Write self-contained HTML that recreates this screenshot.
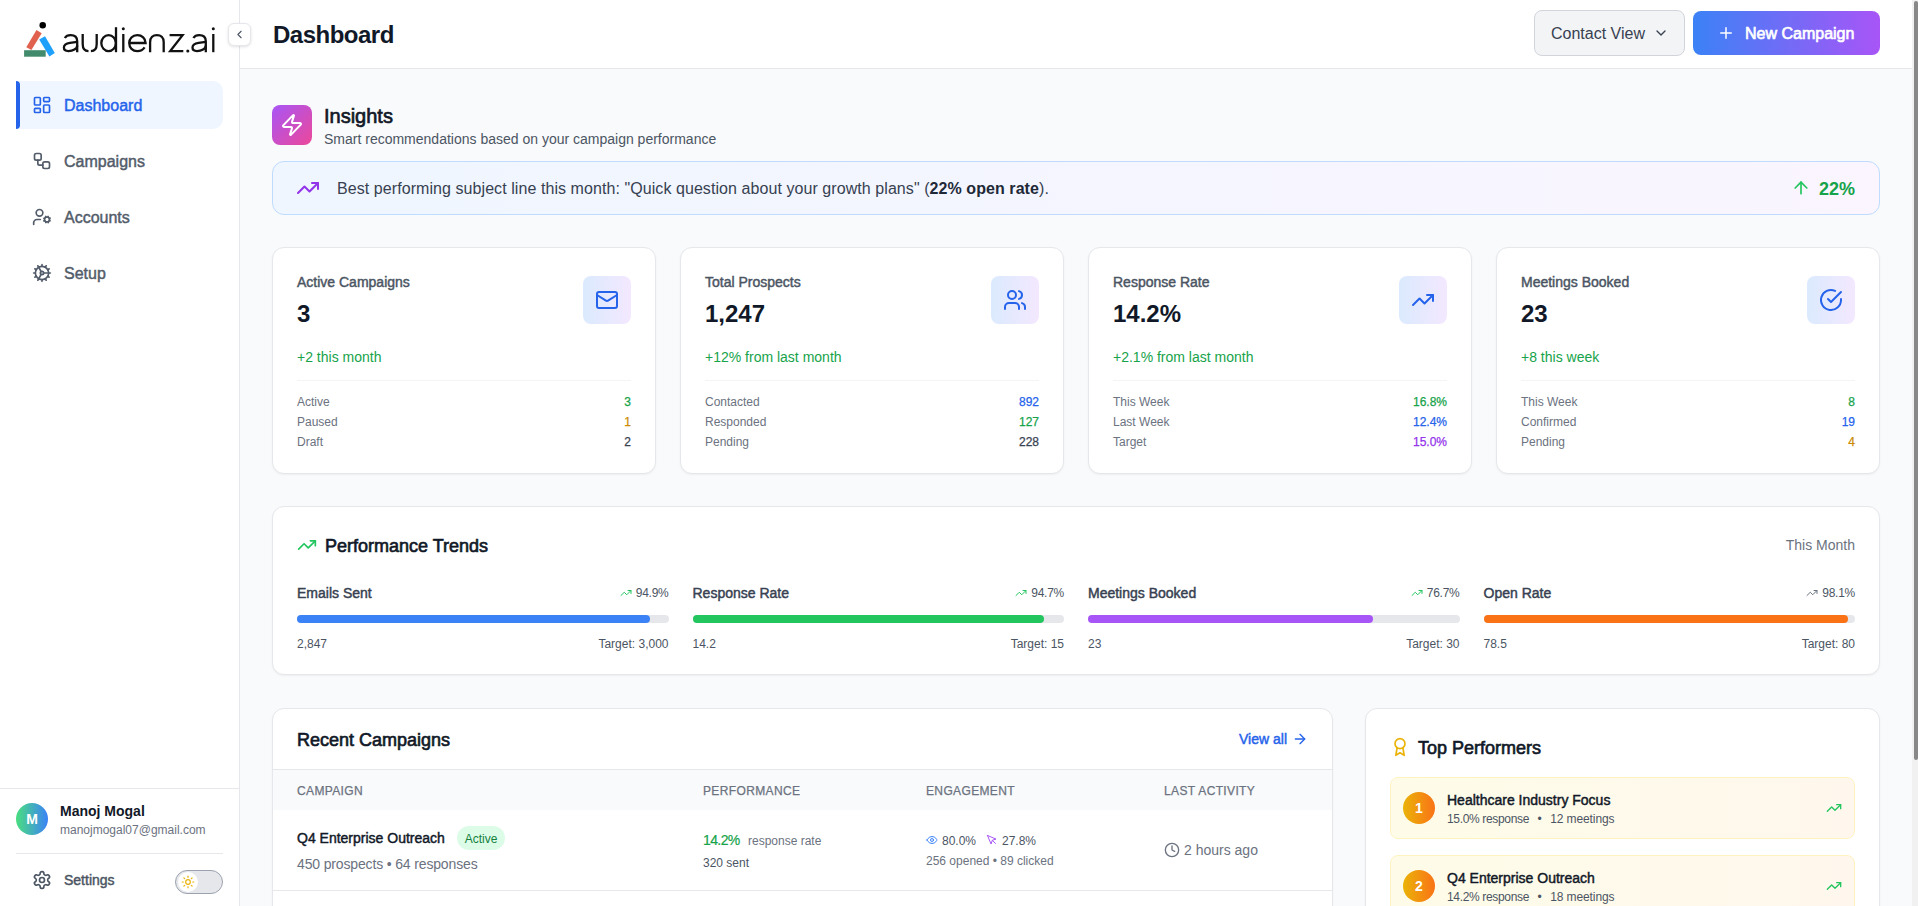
<!DOCTYPE html>
<html><head><meta charset="utf-8">
<style>
*{box-sizing:border-box;margin:0;padding:0}
html,body{width:1918px;height:906px;overflow:hidden;background:#f9fafb;font-family:"Liberation Sans",sans-serif;color:#111827}
.abs{position:absolute}
svg.i{fill:none;stroke:currentColor;stroke-width:2;stroke-linecap:round;stroke-linejoin:round;display:block}
.sb{position:absolute;left:0;top:0;width:240px;height:906px;background:#fff;border-right:1px solid #e5e7eb}
.nav{position:absolute;left:16px;width:207px;height:48px;border-radius:0 10px 10px 0;color:#535c6a}
.nav .ic{position:absolute;left:16px;top:14px}
.nav .tx{position:absolute;left:48px;top:1px;line-height:48px;font-size:16px;-webkit-text-stroke:0.45px currentColor}
.nav.act{background:#eff6ff;color:#2563eb;border-radius:0 10px 10px 0}
.nav.act .bar{position:absolute;left:0;top:0;width:4px;height:48px;background:#2563eb;border-radius:0 4px 4px 0}
.hdr{position:absolute;left:240px;top:0;width:1672px;height:69px;background:#fff;border-bottom:1px solid #e5e7eb}
.scr{position:absolute;left:1912px;top:0;width:6px;height:906px;background:#f1f1f1}
.thumb{position:absolute;left:2px;top:1px;width:4px;height:759px;background:#888;border-radius:2px}
.semi{font-weight:normal;-webkit-text-stroke:0.45px currentColor}
.lg{-webkit-text-stroke:0.65px currentColor}
/*EXTRA*/.card{background:#fff;border:1px solid #e5e7eb;border-radius:12px;box-shadow:0 1px 2px rgba(0,0,0,.05)}
.th{font-size:12px;line-height:16px;color:#6b7280;text-transform:uppercase;letter-spacing:0.03em;font-weight:normal;-webkit-text-stroke:0.25px #6b7280}
/*ENDEXTRA*/</style></head><body>

<!-- SIDEBAR -->
<div class="sb">
  <svg class="abs" style="left:0;top:0" width="60" height="60" viewBox="0 0 60 60">
    <circle cx="42.7" cy="25.2" r="3.25" fill="#000"/>
    <polygon points="36.45,30.1 41.7,33.3 31.4,50 26.3,47.2" fill="#e0614e"/>
    <polygon points="45.0,36.3 39.2,39.4 49.4,56.5 54.8,53" fill="#1ea0fb"/>
    <rect x="24.1" y="50.2" width="21.6" height="6.5" fill="#428a6c"/>
  </svg>
  <svg class="abs" style="left:0;top:0" width="230" height="60" viewBox="0 0 230 60" fill="none" stroke="#111" stroke-width="2.3">
    <g id="la"><path d="M64.8 38 C66 36, 68 35.1, 70.6 35.1 C74.8 35.1, 77.2 37.3, 77.2 41.2 L77.2 52.2"/><path d="M77.2 41.8 L70 42.8 C66 43.4, 63.9 45.3, 63.9 47.6 C63.9 50, 65.6 51.1, 68.4 51.1 C72.8 51.1, 77.2 49, 77.2 45.5"/></g>
    <path d="M82.7 34 L82.7 44 C82.7 48.6, 84.8 51, 88.5 51.1"/><path d="M96.7 34 L96.7 44 C96.7 48.6, 94.6 51, 90.9 51.1"/>
    <path d="M116 27.2 L116 52.2"/><ellipse cx="108.6" cy="43.1" rx="7.3" ry="8"/>
    <path d="M123.3 34 L123.3 52.2"/><circle cx="123.3" cy="28.8" r="1.5" fill="#111" stroke="none"/>
    <path d="M129.3 43 L145.6 43 C145.6 38.3, 141.9 35.1, 137.3 35.1 C132.4 35.1, 129.2 38.8, 129.2 43.1 C129.2 47.7, 132.6 51.1, 137.3 51.1 C140.5 51.1, 143 49.8, 144.6 47.4"/>
    <path d="M150.1 52.2 L150.1 42.2 C150.1 37.6, 153 35.1, 156.9 35.1 C160.8 35.1, 163.7 37.6, 163.7 42.2 L163.7 52.2"/>
    <path d="M169.6 35.1 L182.6 35.1 L170.2 51.1 L183.3 51.1" stroke-linejoin="miter"/>
    <circle cx="187.8" cy="51" r="1.55" fill="#111" stroke="none"/>
    <g transform="translate(128.6 0)"><path d="M64.8 38 C66 36, 68 35.1, 70.6 35.1 C74.8 35.1, 77.2 37.3, 77.2 41.2 L77.2 52.2"/><path d="M77.2 41.8 L70 42.8 C66 43.4, 63.9 45.3, 63.9 47.6 C63.9 50, 65.6 51.1, 68.4 51.1 C72.8 51.1, 77.2 49, 77.2 45.5"/></g>
    <path d="M213.3 34 L213.3 52.2"/><circle cx="213.3" cy="28.8" r="1.5" fill="#111" stroke="none"/>
  </svg>
  <div class="abs" style="z-index:5;left:228px;top:23px;width:23px;height:23px;background:#fff;border:1px solid #e5e7eb;border-radius:6px;box-shadow:0 1px 3px rgba(0,0,0,.12);color:#4b5563">
    <svg class="i abs" style="left:4px;top:4px" width="13" height="13" viewBox="0 0 24 24"><path d="m15 18-6-6 6-6"/></svg>
  </div>

  <div class="nav act" style="top:81px"><div class="bar"></div>
    <svg class="i ic" width="20" height="20" viewBox="0 0 24 24"><rect width="7" height="9" x="3" y="3" rx="1"/><rect width="7" height="5" x="14" y="3" rx="1"/><rect width="7" height="9" x="14" y="12" rx="1"/><rect width="7" height="5" x="3" y="16" rx="1"/></svg>
    <div class="tx">Dashboard</div>
  </div>
  <div class="nav" style="top:137px">
    <svg class="i ic" width="20" height="20" viewBox="0 0 24 24"><rect width="8" height="8" x="3" y="3" rx="2"/><path d="M7 11v4a2 2 0 0 0 2 2h4"/><rect width="8" height="8" x="13" y="13" rx="2"/></svg>
    <div class="tx">Campaigns</div>
  </div>
  <div class="nav" style="top:193px">
    <svg class="i ic" width="20" height="20" viewBox="0 0 24 24"><circle cx="18" cy="15" r="3"/><circle cx="9" cy="7" r="4"/><path d="M10 15H6a4 4 0 0 0-4 4v2"/><path d="m21.7 16.4-.9-.3"/><path d="m15.2 13.9-.9-.3"/><path d="m16.6 18.7.3-.9"/><path d="m19.1 12.2.3-.9"/><path d="m19.6 18.7-.4-1"/><path d="m16.8 12.3-.4-1"/><path d="m14.3 16.6 1-.4"/><path d="m20.7 13.8 1-.4"/></svg>
    <div class="tx">Accounts</div>
  </div>
  <div class="nav" style="top:249px">
    <svg class="i ic" width="20" height="20" viewBox="0 0 24 24"><path d="M12 20a8 8 0 1 0 0-16 8 8 0 0 0 0 16Z"/><path d="M12 14a2 2 0 1 0 0-4 2 2 0 0 0 0 4Z"/><path d="M12 2v2"/><path d="M12 22v-2"/><path d="m17 20.66-1-1.73"/><path d="M11 10.27 7 3.34"/><path d="m20.66 17-1.73-1"/><path d="m3.34 7 1.73 1"/><path d="M14 12h8"/><path d="M2 12h2"/><path d="m20.66 7-1.73 1"/><path d="m3.34 17 1.73-1"/><path d="m17 3.34-1 1.73"/><path d="m11 13.73-4 6.93"/></svg>
    <div class="tx">Setup</div>
  </div>

  <!-- user -->
  <div class="abs" style="left:0;top:788px;width:239px;border-top:1px solid #e5e7eb"></div>
  <div class="abs" style="left:16px;top:803px;width:32px;height:32px;border-radius:50%;background:linear-gradient(90deg,#4ade80,#3b82f6);color:#fff;font-size:14px;font-weight:bold;text-align:center;line-height:32px">M</div>
  <div class="abs" style="left:60px;top:801px;font-size:14px;line-height:20px;color:#111827;font-weight:bold">Manoj Mogal</div>
  <div class="abs" style="left:60px;top:822px;font-size:12px;line-height:16px;color:#6b7280">manojmogal07@gmail.com</div>
  <div class="abs" style="left:16px;top:853px;width:207px;border-top:1px solid #e5e7eb"></div>
  <svg class="i abs" style="left:31.5px;top:869.5px;color:#4b5563" width="20" height="20" viewBox="0 0 24 24"><path d="M12.22 2h-.44a2 2 0 0 0-2 2v.18a2 2 0 0 1-1 1.73l-.43.25a2 2 0 0 1-2 0l-.15-.08a2 2 0 0 0-2.73.73l-.22.38a2 2 0 0 0 .73 2.730l.15.1a2 2 0 0 1 1 1.72v.51a2 2 0 0 1-1 1.74l-.15.09a2 2 0 0 0-.73 2.73l.22.38a2 2 0 0 0 2.73.73l.15-.08a2 2 0 0 1 2 0l.43.25a2 2 0 0 1 1 1.73V20a2 2 0 0 0 2 2h.44a2 2 0 0 0 2-2v-.18a2 2 0 0 1 1-1.73l.43-.25a2 2 0 0 1 2 0l.15.08a2 2 0 0 0 2.73-.73l.22-.39a2 2 0 0 0-.73-2.73l-.15-.08a2 2 0 0 1-1-1.74v-.5a2 2 0 0 1 1-1.74l.15-.09a2 2 0 0 0 .73-2.73l-.22-.38a2 2 0 0 0-2.73-.73l-.15.08a2 2 0 0 1-2 0l-.43-.25a2 2 0 0 1-1-1.73V4a2 2 0 0 0-2-2z"/><circle cx="12" cy="12" r="3"/></svg>
  <div class="abs semi" style="left:64px;top:870px;font-size:14px;line-height:20px;color:#4b5563;font-weight:normal;letter-spacing:0">Settings</div>
  <div class="abs" style="left:175px;top:870px;width:48px;height:24px;border-radius:12px;background:#e5e7eb;border:1px solid #9ca3af">
    <div class="abs" style="left:2px;top:1px;width:20px;height:20px;border-radius:50%;background:#fff"></div>
    <svg class="i abs" style="left:5px;top:4px;color:#eab308" width="14" height="14" viewBox="0 0 24 24"><circle cx="12" cy="12" r="4"/><path d="M12 2v2"/><path d="M12 20v2"/><path d="m4.93 4.93 1.41 1.41"/><path d="m17.66 17.66 1.41 1.41"/><path d="M2 12h2"/><path d="M20 12h2"/><path d="m6.34 17.66-1.41 1.41"/><path d="m19.07 4.93-1.41 1.41"/></svg>
  </div>
</div>

<!-- HEADER -->
<div class="hdr">
  <div class="abs" style="left:33px;top:19px;font-size:24px;line-height:32px;font-weight:bold;color:#111827;letter-spacing:-0.5px">Dashboard</div>
  <div class="abs" style="left:1294px;top:10px;width:151px;height:46px;background:#f3f4f6;border:1px solid #d1d5db;border-radius:8px;color:#374151">
    <div class="abs" style="left:16px;top:1px;line-height:44px;font-size:16px">Contact View</div>
    <svg class="i abs" style="left:118px;top:14px" width="16" height="16" viewBox="0 0 24 24"><path d="m6 9 6 6 6-6"/></svg>
  </div>
  <div class="abs" style="left:1453px;top:11px;width:187px;height:44px;background:linear-gradient(90deg,#3b82f6,#a855f7);border-radius:8px;color:#fff">
    <svg class="i abs" style="left:24px;top:13px" width="18" height="18" viewBox="0 0 24 24"><path d="M5 12h14"/><path d="M12 5v14"/></svg>
    <div class="abs semi lg" style="left:52px;top:1px;line-height:44px;font-size:16px">New Campaign</div>
  </div>
</div>

<!-- MAIN -->
<div id="main" class="abs" style="left:272px;top:69px;width:1608px">
<!-- insights -->
<div class="abs" style="left:0;top:36px;width:40px;height:40px;border-radius:8px;background:linear-gradient(135deg,#a855f7,#ec4899);color:#fff">
  <svg class="i abs" style="left:8px;top:8px" width="24" height="24" viewBox="0 0 24 24"><path d="M4 14a1 1 0 0 1-.78-1.63l9.9-10.2a.5.5 0 0 1 .86.46l-1.92 6.02A1 1 0 0 0 13 10h7a1 1 0 0 1 .78 1.63l-9.9 10.2a.5.5 0 0 1-.86-.46l1.92-6.02A1 1 0 0 0 11 14z"/></svg>
</div>
<div class="abs semi lg" style="left:52px;top:33px;font-size:20px;line-height:28px;color:#111827">Insights</div>
<div class="abs" style="left:52px;top:60px;font-size:14px;line-height:20px;color:#4b5563">Smart recommendations based on your campaign performance</div>

<div class="abs" style="left:0;top:92px;width:1608px;height:54px;border:1px solid #bfdbfe;border-radius:12px;background:linear-gradient(90deg,#eff6ff,#faf5ff)">
  <svg class="i abs" style="left:23px;top:14px;color:#9333ea" width="24" height="24" viewBox="0 0 24 24"><polyline points="22 7 13.5 15.5 8.5 10.5 2 17"/><polyline points="16 7 22 7 22 13"/></svg>
  <div class="abs" style="left:64px;top:15px;font-size:16px;line-height:24px;color:#374151;white-space:nowrap;letter-spacing:0.07px">Best performing subject line this month: "Quick question about your growth plans" (<b style="color:#1f2937">22% open rate</b>).</div>
  <svg class="i abs" style="left:1518px;top:16px;color:#22c55e" width="20" height="20" viewBox="0 0 24 24"><path d="m5 12 7-7 7 7"/><path d="M12 19V5"/></svg>
  <div class="abs" style="right:24px;top:13px;font-size:18px;line-height:28px;font-weight:bold;color:#16a34a">22%</div>
</div>

<!-- stat cards -->
<div class="abs card" style="left:0px;top:178px;width:384px;height:227px">
  <div class="abs semi" style="left:24px;top:24px;font-size:14px;line-height:20px;color:#4b5563">Active Campaigns</div>
  <div class="abs" style="left:24px;top:50px;font-size:24px;line-height:32px;font-weight:bold;color:#111827">3</div>
  <div class="abs" style="left:310px;top:28px;width:48px;height:48px;border-radius:8px;background:linear-gradient(90deg,#dbeafe,#f3e8ff);color:#2563eb">
    <svg class="i abs" style="left:12px;top:12px" width="24" height="24" viewBox="0 0 24 24"><rect width="20" height="16" x="2" y="4" rx="2"/><path d="m22 7-8.97 5.7a1.94 1.94 0 0 1-2.06 0L2 7"/></svg>
  </div>
  <div class="abs" style="left:24px;top:99px;font-size:14px;line-height:20px;color:#16a34a">+2 this month</div>
  <div class="abs" style="left:24px;top:132px;width:334px;border-top:1px solid #f3f4f6"></div>
  <div class="abs" style="left:24px;top:144px;font-size:12px;line-height:20px;color:#6b7280">Active</div>
  <div class="abs" style="right:24px;top:144px;font-size:12px;line-height:20px;color:#16a34a;-webkit-text-stroke:0.25px #16a34a">3</div>
  <div class="abs" style="left:24px;top:164px;font-size:12px;line-height:20px;color:#6b7280">Paused</div>
  <div class="abs" style="right:24px;top:164px;font-size:12px;line-height:20px;color:#ca8a04;-webkit-text-stroke:0.25px #ca8a04">1</div>
  <div class="abs" style="left:24px;top:184px;font-size:12px;line-height:20px;color:#6b7280">Draft</div>
  <div class="abs" style="right:24px;top:184px;font-size:12px;line-height:20px;color:#374151;-webkit-text-stroke:0.25px #374151">2</div>
</div>
<div class="abs card" style="left:408px;top:178px;width:384px;height:227px">
  <div class="abs semi" style="left:24px;top:24px;font-size:14px;line-height:20px;color:#4b5563">Total Prospects</div>
  <div class="abs" style="left:24px;top:50px;font-size:24px;line-height:32px;font-weight:bold;color:#111827">1,247</div>
  <div class="abs" style="left:310px;top:28px;width:48px;height:48px;border-radius:8px;background:linear-gradient(90deg,#dbeafe,#f3e8ff);color:#2563eb">
    <svg class="i abs" style="left:12px;top:12px" width="24" height="24" viewBox="0 0 24 24"><path d="M16 21v-2a4 4 0 0 0-4-4H6a4 4 0 0 0-4 4v2"/><circle cx="9" cy="7" r="4"/><path d="M22 21v-2a4 4 0 0 0-3-3.87"/><path d="M16 3.13a4 4 0 0 1 0 7.75"/></svg>
  </div>
  <div class="abs" style="left:24px;top:99px;font-size:14px;line-height:20px;color:#16a34a">+12% from last month</div>
  <div class="abs" style="left:24px;top:132px;width:334px;border-top:1px solid #f3f4f6"></div>
  <div class="abs" style="left:24px;top:144px;font-size:12px;line-height:20px;color:#6b7280">Contacted</div>
  <div class="abs" style="right:24px;top:144px;font-size:12px;line-height:20px;color:#2563eb;-webkit-text-stroke:0.25px #2563eb">892</div>
  <div class="abs" style="left:24px;top:164px;font-size:12px;line-height:20px;color:#6b7280">Responded</div>
  <div class="abs" style="right:24px;top:164px;font-size:12px;line-height:20px;color:#16a34a;-webkit-text-stroke:0.25px #16a34a">127</div>
  <div class="abs" style="left:24px;top:184px;font-size:12px;line-height:20px;color:#6b7280">Pending</div>
  <div class="abs" style="right:24px;top:184px;font-size:12px;line-height:20px;color:#374151;-webkit-text-stroke:0.25px #374151">228</div>
</div>
<div class="abs card" style="left:816px;top:178px;width:384px;height:227px">
  <div class="abs semi" style="left:24px;top:24px;font-size:14px;line-height:20px;color:#4b5563">Response Rate</div>
  <div class="abs" style="left:24px;top:50px;font-size:24px;line-height:32px;font-weight:bold;color:#111827">14.2%</div>
  <div class="abs" style="left:310px;top:28px;width:48px;height:48px;border-radius:8px;background:linear-gradient(90deg,#dbeafe,#f3e8ff);color:#2563eb">
    <svg class="i abs" style="left:12px;top:12px" width="24" height="24" viewBox="0 0 24 24"><polyline points="22 7 13.5 15.5 8.5 10.5 2 17"/><polyline points="16 7 22 7 22 13"/></svg>
  </div>
  <div class="abs" style="left:24px;top:99px;font-size:14px;line-height:20px;color:#16a34a">+2.1% from last month</div>
  <div class="abs" style="left:24px;top:132px;width:334px;border-top:1px solid #f3f4f6"></div>
  <div class="abs" style="left:24px;top:144px;font-size:12px;line-height:20px;color:#6b7280">This Week</div>
  <div class="abs" style="right:24px;top:144px;font-size:12px;line-height:20px;color:#16a34a;-webkit-text-stroke:0.25px #16a34a">16.8%</div>
  <div class="abs" style="left:24px;top:164px;font-size:12px;line-height:20px;color:#6b7280">Last Week</div>
  <div class="abs" style="right:24px;top:164px;font-size:12px;line-height:20px;color:#2563eb;-webkit-text-stroke:0.25px #2563eb">12.4%</div>
  <div class="abs" style="left:24px;top:184px;font-size:12px;line-height:20px;color:#6b7280">Target</div>
  <div class="abs" style="right:24px;top:184px;font-size:12px;line-height:20px;color:#9333ea;-webkit-text-stroke:0.25px #9333ea">15.0%</div>
</div>
<div class="abs card" style="left:1224px;top:178px;width:384px;height:227px">
  <div class="abs semi" style="left:24px;top:24px;font-size:14px;line-height:20px;color:#4b5563">Meetings Booked</div>
  <div class="abs" style="left:24px;top:50px;font-size:24px;line-height:32px;font-weight:bold;color:#111827">23</div>
  <div class="abs" style="left:310px;top:28px;width:48px;height:48px;border-radius:8px;background:linear-gradient(90deg,#dbeafe,#f3e8ff);color:#2563eb">
    <svg class="i abs" style="left:12px;top:12px" width="24" height="24" viewBox="0 0 24 24"><path d="M22 11.08V12a10 10 0 1 1-5.93-9.14"/><polyline points="22 4 12 14.01 9 11.01"/></svg>
  </div>
  <div class="abs" style="left:24px;top:99px;font-size:14px;line-height:20px;color:#16a34a">+8 this week</div>
  <div class="abs" style="left:24px;top:132px;width:334px;border-top:1px solid #f3f4f6"></div>
  <div class="abs" style="left:24px;top:144px;font-size:12px;line-height:20px;color:#6b7280">This Week</div>
  <div class="abs" style="right:24px;top:144px;font-size:12px;line-height:20px;color:#16a34a;-webkit-text-stroke:0.25px #16a34a">8</div>
  <div class="abs" style="left:24px;top:164px;font-size:12px;line-height:20px;color:#6b7280">Confirmed</div>
  <div class="abs" style="right:24px;top:164px;font-size:12px;line-height:20px;color:#2563eb;-webkit-text-stroke:0.25px #2563eb">19</div>
  <div class="abs" style="left:24px;top:184px;font-size:12px;line-height:20px;color:#6b7280">Pending</div>
  <div class="abs" style="right:24px;top:184px;font-size:12px;line-height:20px;color:#ca8a04;-webkit-text-stroke:0.25px #ca8a04">4</div>
</div>


<!-- performance trends -->
<div class="abs card" style="left:0;top:437px;width:1608px;height:169px">
  <svg class="i abs" style="left:24px;top:28px;color:#22c55e" width="20" height="20" viewBox="0 0 24 24"><polyline points="22 7 13.5 15.5 8.5 10.5 2 17"/><polyline points="16 7 22 7 22 13"/></svg>
  <div class="abs semi lg" style="left:52px;top:25px;font-size:18px;line-height:28px;color:#111827">Performance Trends</div>
  <div class="abs" style="right:24px;top:28px;font-size:14px;line-height:20px;color:#6b7280">This Month</div>
  <div class="abs" style="left:24.0px;top:0;width:371.5px;height:166px">
    <div class="abs semi" style="left:0;top:76px;font-size:14px;line-height:20px;color:#374151">Emails Sent</div>
    <svg class="i abs" style="right:37px;top:80px;color:#22c55e" width="12" height="12" viewBox="0 0 24 24"><polyline points="22 7 13.5 15.5 8.5 10.5 2 17"/><polyline points="16 7 22 7 22 13"/></svg>
    <div class="abs" style="right:0;top:78px;font-size:12px;line-height:16px;color:#4b5563;letter-spacing:-0.25px">94.9%</div>
    <div class="abs" style="left:0;top:108px;width:100%;height:8px;border-radius:4px;background:#e5e7eb"><div style="width:94.9%;height:8px;border-radius:4px;background:#3b82f6"></div></div>
    <div class="abs" style="left:0;top:129px;font-size:12px;line-height:16px;color:#4b5563">2,847</div>
    <div class="abs" style="right:0;top:129px;font-size:12px;line-height:16px;color:#4b5563">Target: 3,000</div>
  </div>
<div class="abs" style="left:419.5px;top:0;width:371.5px;height:166px">
    <div class="abs semi" style="left:0;top:76px;font-size:14px;line-height:20px;color:#374151">Response Rate</div>
    <svg class="i abs" style="right:37px;top:80px;color:#22c55e" width="12" height="12" viewBox="0 0 24 24"><polyline points="22 7 13.5 15.5 8.5 10.5 2 17"/><polyline points="16 7 22 7 22 13"/></svg>
    <div class="abs" style="right:0;top:78px;font-size:12px;line-height:16px;color:#4b5563;letter-spacing:-0.25px">94.7%</div>
    <div class="abs" style="left:0;top:108px;width:100%;height:8px;border-radius:4px;background:#e5e7eb"><div style="width:94.7%;height:8px;border-radius:4px;background:#22c55e"></div></div>
    <div class="abs" style="left:0;top:129px;font-size:12px;line-height:16px;color:#4b5563">14.2</div>
    <div class="abs" style="right:0;top:129px;font-size:12px;line-height:16px;color:#4b5563">Target: 15</div>
  </div>
<div class="abs" style="left:815.0px;top:0;width:371.5px;height:166px">
    <div class="abs semi" style="left:0;top:76px;font-size:14px;line-height:20px;color:#374151">Meetings Booked</div>
    <svg class="i abs" style="right:37px;top:80px;color:#22c55e" width="12" height="12" viewBox="0 0 24 24"><polyline points="22 7 13.5 15.5 8.5 10.5 2 17"/><polyline points="16 7 22 7 22 13"/></svg>
    <div class="abs" style="right:0;top:78px;font-size:12px;line-height:16px;color:#4b5563;letter-spacing:-0.25px">76.7%</div>
    <div class="abs" style="left:0;top:108px;width:100%;height:8px;border-radius:4px;background:#e5e7eb"><div style="width:76.7%;height:8px;border-radius:4px;background:#a855f7"></div></div>
    <div class="abs" style="left:0;top:129px;font-size:12px;line-height:16px;color:#4b5563">23</div>
    <div class="abs" style="right:0;top:129px;font-size:12px;line-height:16px;color:#4b5563">Target: 30</div>
  </div>
<div class="abs" style="left:1210.5px;top:0;width:371.5px;height:166px">
    <div class="abs semi" style="left:0;top:76px;font-size:14px;line-height:20px;color:#374151">Open Rate</div>
    <svg class="i abs" style="right:37px;top:80px;color:#6b7280" width="12" height="12" viewBox="0 0 24 24"><polyline points="22 7 13.5 15.5 8.5 10.5 2 17"/><polyline points="16 7 22 7 22 13"/></svg>
    <div class="abs" style="right:0;top:78px;font-size:12px;line-height:16px;color:#4b5563;letter-spacing:-0.25px">98.1%</div>
    <div class="abs" style="left:0;top:108px;width:100%;height:8px;border-radius:4px;background:#e5e7eb"><div style="width:98.1%;height:8px;border-radius:4px;background:#f97316"></div></div>
    <div class="abs" style="left:0;top:129px;font-size:12px;line-height:16px;color:#4b5563">78.5</div>
    <div class="abs" style="right:0;top:129px;font-size:12px;line-height:16px;color:#4b5563">Target: 80</div>
  </div>

</div>

<!-- recent campaigns -->
<div class="abs card" style="left:0;top:639px;width:1061px;height:300px;overflow:hidden">
  <div class="abs semi lg" style="left:24px;top:17px;font-size:18px;line-height:28px;color:#111827">Recent Campaigns</div>
  <div class="abs semi" style="right:45px;top:20px;font-size:14px;line-height:20px;color:#2563eb">View all</div>
  <svg class="i abs" style="right:24px;top:22px;color:#2563eb" width="16" height="16" viewBox="0 0 24 24"><path d="M5 12h14"/><path d="m12 5 7 7-7 7"/></svg>
  <div class="abs" style="left:0;top:60px;width:1059px;height:41px;background:#f9fafb;border-top:1px solid #e5e7eb"></div>
  
  <div class="abs th" style="left:24px;top:74px">Campaign</div>
  <div class="abs th" style="left:430px;top:74px">Performance</div>
  <div class="abs th" style="left:653px;top:74px">Engagement</div>
  <div class="abs th" style="left:891px;top:74px">Last Activity</div>
  <div class="abs semi" style="left:24px;top:119px;font-size:14px;line-height:20px;color:#111827">Q4 Enterprise Outreach</div>
  <div class="abs" style="left:184px;top:117px;width:48px;height:24px;border-radius:12px;background:#dcfce7;color:#15803d;font-size:12px;line-height:26px;text-align:center">Active</div>
  <div class="abs" style="left:24px;top:145px;font-size:14px;line-height:20px;color:#6b7280;letter-spacing:-0.15px">450 prospects &bull; 64 responses</div>
  <div class="abs" style="left:430px;top:121px;font-size:14px;line-height:20px;color:#16a34a;letter-spacing:-0.6px;-webkit-text-stroke:0.2px #16a34a">14.2%</div>
  <div class="abs" style="left:475px;top:124px;font-size:12px;line-height:16px;color:#6b7280">response rate</div>
  <div class="abs" style="left:430px;top:146px;font-size:12px;line-height:16px;color:#4b5563">320 sent</div>
  <svg class="i abs" style="left:653px;top:125px;color:#3b82f6" width="12" height="12" viewBox="0 0 24 24"><path d="M2 12s3-7 10-7 10 7 10 7-3 7-10 7-10-7-10-7Z"/><circle cx="12" cy="12" r="3"/></svg>
  <div class="abs" style="left:669px;top:124px;font-size:12px;line-height:16px;color:#4b5563">80.0%</div>
  <svg class="i abs" style="left:713px;top:125px;color:#a855f7" width="12" height="12" viewBox="0 0 24 24"><path d="m3 3 7.07 16.97 2.51-7.39 7.39-2.51L3 3z"/><path d="m13 13 6 6"/></svg>
  <div class="abs" style="left:729px;top:124px;font-size:12px;line-height:16px;color:#4b5563">27.8%</div>
  <div class="abs" style="left:653px;top:144px;font-size:12px;line-height:16px;color:#6b7280">256 opened &bull; 89 clicked</div>
  <svg class="i abs" style="left:891px;top:133px;color:#6b7280" width="16" height="16" viewBox="0 0 24 24"><circle cx="12" cy="12" r="10"/><polyline points="12 6 12 12 16 14"/></svg>
  <div class="abs" style="left:911px;top:131px;font-size:14px;line-height:20px;color:#6b7280">2 hours ago</div>
  <div class="abs" style="left:0;top:181px;width:1059px;border-top:1px solid #e5e7eb"></div>

</div>

<!-- top performers -->
<div class="abs card" style="left:1093px;top:639px;width:515px;height:300px;overflow:hidden">
  <svg class="i abs" style="left:24px;top:28px;color:#eab308" width="20" height="20" viewBox="0 0 24 24"><circle cx="12" cy="8" r="6"/><path d="M15.477 12.89 17 22l-5-3-5 3 1.523-9.11"/></svg>
  <div class="abs semi lg" style="left:52px;top:25px;font-size:18px;line-height:28px;color:#111827">Top Performers</div>
  <div class="abs" style="left:24px;top:68px;width:465px;height:62px;border:1px solid #fef3c0;border-radius:8px;background:linear-gradient(90deg,#fefce8,#fff7ed)">
    <div class="abs" style="left:12px;top:14px;width:32px;height:32px;border-radius:50%;background:linear-gradient(90deg,#eab308,#f97316);color:#fff;font-size:14px;font-weight:bold;line-height:32px;text-align:center">1</div>
    <div class="abs semi" style="left:56px;top:12px;font-size:14px;line-height:20px;color:#111827">Healthcare Industry Focus</div>
    <div class="abs" style="left:56px;top:33px;font-size:12px;line-height:16px;color:#4b5563;white-space:nowrap"><span style="letter-spacing:-0.34px">15.0% response</span><span style="margin:0 8.5px">&bull;</span><span style="letter-spacing:-0.1px">12 meetings</span></div>
    <svg class="i abs" style="left:435px;top:22px;color:#22c55e" width="16" height="16" viewBox="0 0 24 24"><polyline points="22 7 13.5 15.5 8.5 10.5 2 17"/><polyline points="16 7 22 7 22 13"/></svg>
  </div>
<div class="abs" style="left:24px;top:146px;width:465px;height:62px;border:1px solid #fef3c0;border-radius:8px;background:linear-gradient(90deg,#fefce8,#fff7ed)">
    <div class="abs" style="left:12px;top:14px;width:32px;height:32px;border-radius:50%;background:linear-gradient(90deg,#eab308,#f97316);color:#fff;font-size:14px;font-weight:bold;line-height:32px;text-align:center">2</div>
    <div class="abs semi" style="left:56px;top:12px;font-size:14px;line-height:20px;color:#111827">Q4 Enterprise Outreach</div>
    <div class="abs" style="left:56px;top:33px;font-size:12px;line-height:16px;color:#4b5563;white-space:nowrap"><span style="letter-spacing:-0.34px">14.2% response</span><span style="margin:0 8.5px">&bull;</span><span style="letter-spacing:-0.1px">18 meetings</span></div>
    <svg class="i abs" style="left:435px;top:22px;color:#22c55e" width="16" height="16" viewBox="0 0 24 24"><polyline points="22 7 13.5 15.5 8.5 10.5 2 17"/><polyline points="16 7 22 7 22 13"/></svg>
  </div>

</div>

</div>

<div class="scr"><div class="thumb"></div></div>
</body></html>
